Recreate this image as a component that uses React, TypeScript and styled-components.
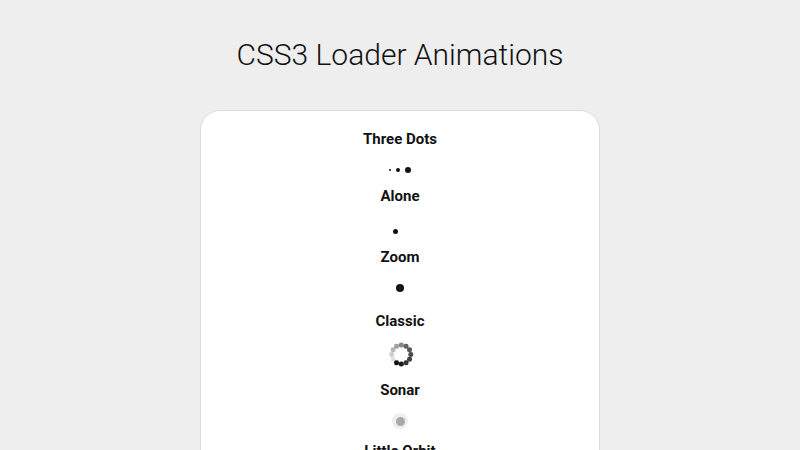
import React from 'react';
import styled, { createGlobalStyle } from 'styled-components';

const GlobalStyle = createGlobalStyle`
  html, body {
    margin: 0;
    padding: 0;
    background: #eeeeee;
    font-family: Roboto, "Liberation Sans", sans-serif;
    color: #111;
    overflow: hidden;
  }
`;

const Page = styled.div`
  display: flex;
  flex-direction: column;
  align-items: center;
  height: 450px;
`;

const Heading = styled.h1`
  margin: 35px 0 0;
  height: 40px;
  line-height: 40px;
  font-size: 30px;
  font-weight: 300;
  color: #111;
`;

const Card = styled.div`
  margin-top: 35px;
  width: 398px;
  background: #fff;
  border: 1px solid #dcdcdc;
  border-radius: 20px;
  padding-top: 18px;
  display: flex;
  flex-direction: column;
  align-items: center;
`;

const Label = styled.h2`
  margin: 0;
  height: 20px;
  line-height: 20px;
  font-size: 15px;
  font-weight: 700;
  color: #111;
`;

const Stage = styled.div<{ $h: number; $top: number }>`
  height: ${(p) => p.$h}px;
  padding-top: ${(p) => p.$top}px;
  box-sizing: border-box;
  width: 100%;
  display: flex;
  justify-content: center;
  align-items: flex-start;
`;

const DotRow = styled.div`
  display: flex;
  align-items: center;
  gap: 5px;
  height: 6px;
`;

const Dot = styled.span<{ $size: number; $shift?: number }>`
  display: block;
  width: ${(p) => p.$size}px;
  height: ${(p) => p.$size}px;
  border-radius: 50%;
  background: #111;
  transform: translateX(${(p) => p.$shift ?? 0}px);
`;

const Spinner = styled.div`
  position: relative;
  width: 24px;
  height: 24px;
`;

const SpinDot = styled.span`
  position: absolute;
  left: 10px;
  top: 10px;
  width: 4.5px;
  height: 4.5px;
  border-radius: 50%;
`;

const Sonar = styled.div`
  width: 16px;
  height: 16px;
  border-radius: 50%;
  background: #efefef;
  display: flex;
  align-items: center;
  justify-content: center;
`;

const SonarCore = styled.span`
  width: 9px;
  height: 9px;
  border-radius: 50%;
  background: #a8a8a8;
`;

const spinShades = [0.95, 0.85, 0.8, 0.75, 0.7, 0.65, 0.5, 0.4, 0.3, 0.2, 0.12, 1];

const Classic = () => (
  <Spinner>
    {spinShades.map((o, i) => {
      // start at 6 o'clock, run counter-clockwise
      const angle = (90 - i * 30) * (Math.PI / 180);
      const x = Math.cos(angle) * 9.5 + 0.8;
      const y = Math.sin(angle) * 9.5;
      return (
        <SpinDot
          key={i}
          style={{ transform: `translate(${x}px, ${y}px)`, background: `rgba(17,17,17,${o})` }}
        />
      );
    })}
  </Spinner>
);

const App = () => (
  <>
    <GlobalStyle />
    <Page>
      <Heading>CSS3 Loader Animations</Heading>
      <Card>
        <Label>Three Dots</Label>
        <Stage $h={37} $top={18}>
          <DotRow>
            <Dot $size={2} />
            <Dot $size={4} />
            <Dot $size={6} />
          </DotRow>
        </Stage>
        <Label>Alone</Label>
        <Stage $h={41} $top={23}>
          <Dot $size={5} $shift={-5} />
        </Stage>
        <Label>Zoom</Label>
        <Stage $h={44} $top={17}>
          <Dot $size={8} />
        </Stage>
        <Label>Classic</Label>
        <Stage $h={49} $top={11}>
          <Classic />
        </Stage>
        <Label>Sonar</Label>
        <Stage $h={41} $top={13}>
          <Sonar>
            <SonarCore />
          </Sonar>
        </Stage>
        <Label>Little Orbit</Label>
        <Stage $h={60} $top={20}>
          <Dot $size={6} />
        </Stage>
      </Card>
    </Page>
  </>
);

export default App;
